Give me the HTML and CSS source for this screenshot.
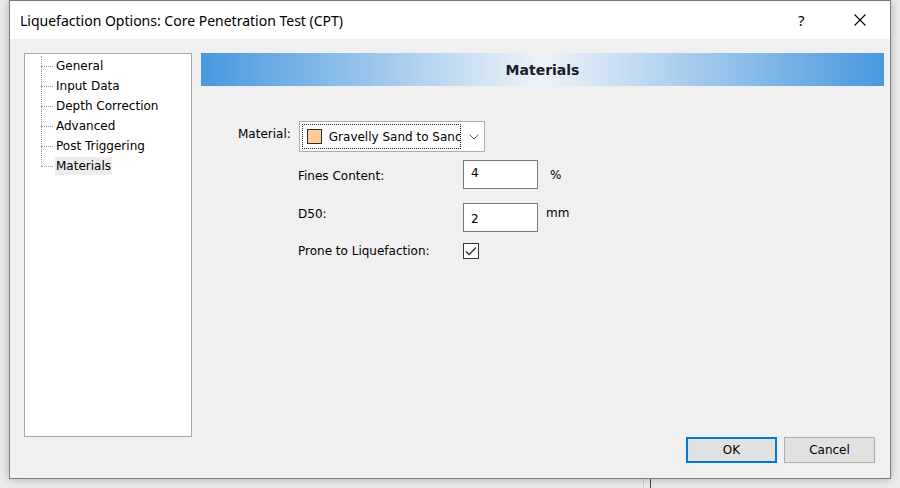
FILE: index.html
```html
<!DOCTYPE html>
<html>
<head>
<meta charset="utf-8">
<link rel="stylesheet" href="styles.css">
</head>
<body>
<div class="dialog">
  <div class="titlebar">
    <span class="title">Liquefaction Options: Core Penetration Test (CPT)</span>
    <span class="help">?</span>
    <span class="close"><svg width="12" height="12" viewBox="0 0 12 12"><path d="M0.5 0.5L11.5 11.5M11.5 0.5L0.5 11.5" stroke="#000" stroke-width="1.1" fill="none"/></svg></span>
  </div>
  <div class="content">
    <div class="main">
      <div class="tree">
        <ul class="tree-list">
          <li><span>General</span></li>
          <li><span>Input Data</span></li>
          <li><span>Depth Correction</span></li>
          <li><span>Advanced</span></li>
          <li><span>Post Triggering</span></li>
          <li class="last"><span class="selected">Materials</span></li>
        </ul>
      </div>
      <div class="page">
        <div class="page-header">Materials</div>
        <div class="form">
          <div class="row-material">
            <span class="label-material">Material:</span>
            <div class="combo">
              <div class="combo-focus">
                <span class="swatch"></span>
                <span class="combo-text">Gravelly Sand to Sand</span>
              </div>
              <svg class="chevron" width="10" height="6" viewBox="0 0 10 6"><path d="M0.5 0.5L5 5L9.5 0.5" stroke="#606060" stroke-width="1" fill="none"/></svg>
            </div>
          </div>
          <div class="field field-fines">
            <span class="field-label">Fines Content:</span>
            <div class="textbox">4</div>
            <span class="unit unit-pct">%</span>
          </div>
          <div class="field field-d50">
            <span class="field-label">D50:</span>
            <div class="textbox">2</div>
            <span class="unit unit-mm">mm</span>
          </div>
          <div class="field field-prone">
            <span class="field-label">Prone to Liquefaction:</span>
            <span class="checkbox"><svg width="14" height="14" viewBox="0 0 14 14"><path d="M2 7.5L5.2 10.5L12 3.5" stroke="#333" stroke-width="1.3" fill="none"/></svg></span>
          </div>
        </div>
      </div>
    </div>
    <div class="buttons">
      <button class="btn btn-default">OK</button>
      <button class="btn">Cancel</button>
    </div>
  </div>
</div>
</body>
</html>
```
FILE: styles.css
```css
html, body {
  margin: 0;
  padding: 0;
}
body {
  width: 900px;
  height: 488px;
  overflow: hidden;
  background:
    linear-gradient(to right, transparent 643px, #cfcfcf 643px, #cfcfcf 644px, transparent 644px, transparent 650px, #4a4a4a 650px, #4a4a4a 651px, transparent 651px),
    #ececec;
  font-family: "DejaVu Sans", sans-serif;
  font-size: 12px;
  color: #000;
}
.dialog {
  margin-left: 9px;
  width: 882px;
  height: 479px;
  box-sizing: border-box;
  border: 1px solid #7c7c7c;
  background: #f0f0f0;
  box-shadow: 0 0 9px rgba(0, 0, 0, 0.28);
  display: flex;
  flex-direction: column;
}
.titlebar {
  height: 38px;
  background: #fff;
  display: flex;
  align-items: center;
  flex: none;
}
.title {
  font-family: "Noto Sans", sans-serif;
  font-size: 14px;
  margin-left: 10px;
  flex: 1;
}
.help {
  font-family: "Noto Sans", sans-serif;
  font-size: 15px;
  width: 10px;
  margin-right: 46px;
}
.close {
  display: flex;
  width: 12px;
  height: 12px;
  margin-right: 24px;
}
.content {
  flex: 1;
  padding: 14px 6px 15px 14px;
  display: flex;
  flex-direction: column;
}
.main {
  height: 384px;
  display: flex;
  gap: 9px;
}
.tree {
  width: 168px;
  height: 384px;
  box-sizing: border-box;
  border: 1px solid #a4a9b0;
  background: #fff;
  padding: 2px 0 0 16px;
  flex: none;
}
.tree-list {
  list-style: none;
  margin: 0;
  padding: 0;
}
.tree-list li {
  height: 20px;
  line-height: 20px;
  position: relative;
  padding-left: 14px;
}
.tree-list li::before {
  content: "";
  position: absolute;
  left: 0;
  top: 10px;
  width: 12px;
  border-top: 1px dotted #9a9a9a;
}
.tree-list li::after {
  content: "";
  position: absolute;
  left: 0;
  top: -10px;
  height: 20px;
  border-left: 1px dotted #9a9a9a;
}
.tree-list li:first-child::after {
  top: 0;
  height: 10px;
}
.tree-list span {
  display: inline-block;
  padding: 0 1px;
  line-height: 18px;
}
.tree-list span.selected {
  background: #ececec;
}
.page {
  flex: 1;
  display: flex;
  flex-direction: column;
}
.page-header {
  height: 33px;
  background: linear-gradient(to right, #4898de 0%, #eef3f8 50%, #4898de 100%);
  display: flex;
  align-items: center;
  justify-content: center;
  font-weight: bold;
  font-size: 14px;
  color: #1b1b2a;
  box-sizing: border-box;
}
.form {
  padding-top: 35px;
}
.row-material {
  display: flex;
  align-items: center;
  padding-left: 37px;
}
.label-material {
  margin-right: 8px;
  margin-top: -5px;
}
.combo {
  width: 186px;
  height: 31px;
  box-sizing: border-box;
  border: 1px solid #adadad;
  background: #fff;
  display: flex;
  align-items: center;
  padding: 2px;
}
.combo-focus {
  width: 159px;
  height: 25px;
  box-sizing: border-box;
  border: 1px dotted #222;
  display: flex;
  align-items: center;
  overflow: hidden;
  white-space: nowrap;
  padding-left: 4px;
}
.swatch {
  width: 15px;
  height: 15px;
  box-sizing: border-box;
  border: 1px solid #2b2b2b;
  background: #ffcc99;
  flex: none;
  margin-right: 7px;
}
.combo-text {
  font-size: 12px;
}
.chevron {
  margin-left: 8px;
}
.field {
  display: flex;
  align-items: center;
  padding-left: 97px;
}
.field-label {
  width: 165px;
  flex: none;
}
.field-fines {
  margin-top: 8px;
}
.field-fines .field-label {
  margin-top: 2px;
}
.field-d50 {
  margin-top: 14px;
}
.field-d50 .field-label {
  margin-top: -8px;
}
.field-prone {
  margin-top: 11px;
}
.textbox {
  width: 75px;
  height: 29px;
  box-sizing: border-box;
  border: 1px solid #7a7a7a;
  background: #fff;
  padding-left: 7px;
  display: flex;
  align-items: center;
}
.field-fines .textbox {
  padding-bottom: 3px;
}
.field-d50 .textbox {
  padding-top: 2px;
}
.unit-pct {
  margin-left: 12px;
}
.unit-mm {
  margin-left: 8px;
  margin-top: -10px;
}
.checkbox {
  width: 16px;
  height: 16px;
  box-sizing: border-box;
  border: 1px solid #333;
  background: #fff;
  display: flex;
  align-items: center;
  justify-content: center;
}
.buttons {
  display: flex;
  justify-content: flex-end;
  gap: 7px;
  margin-right: 9px;
}
.btn {
  width: 91px;
  height: 26px;
  box-sizing: border-box;
  border: 1px solid #adadad;
  background: #e1e1e1;
  font-family: "DejaVu Sans", sans-serif;
  font-size: 12px;
  color: #000;
  padding: 0;
  margin: 0;
}
.btn-default {
  border: 2px solid #0078d7;
}
```
